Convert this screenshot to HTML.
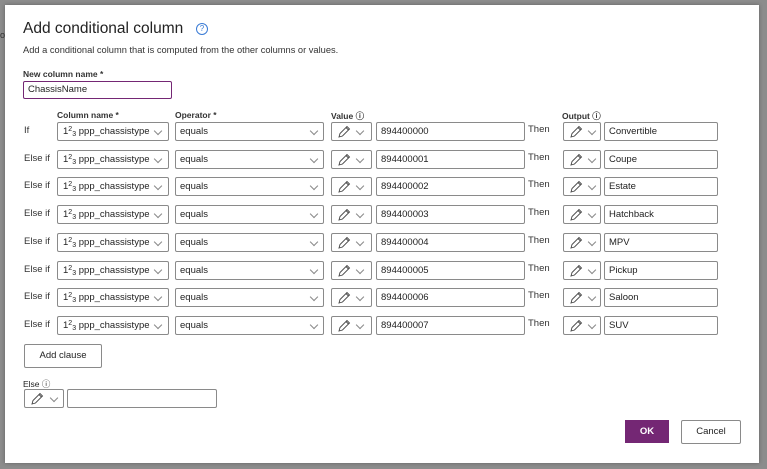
<!DOCTYPE html>
<html><head><style>
body{margin:0;width:767px;height:469px;background:#8c8c8c;font-family:"Liberation Sans",sans-serif;overflow:hidden;position:relative}
.dlg{position:absolute;left:5px;top:5px;width:754px;height:458px;background:#fff;box-shadow:0 0 4px rgba(0,0,0,.3)}
.a{position:absolute}
.box{position:absolute;height:17px;border:1px solid #8a8a8a;border-radius:2px;background:#fff;font-size:9.5px;line-height:17px;color:#222;box-sizing:content-box;white-space:nowrap;overflow:hidden}
.lbl{position:absolute;font-size:8.5px;font-weight:bold;color:#333}
.chev{position:absolute;width:5px;height:5px;border-right:1px solid #888;border-bottom:1px solid #888;transform:rotate(45deg)}
.side{position:absolute;font-size:9.5px;color:#333}
.sp{position:relative;font-size:7px}
</style></head><body>
<div class="a" style="left:0;top:30px;font-size:9px;color:#333">o</div>
<div class="dlg"></div>
<div class="a" style="left:23px;top:20px;font-size:15.5px;color:#222">Add conditional column</div>
<div class="a" style="left:196px;top:23px;width:10px;height:10px;border:1.2px solid #3a7bd5;border-radius:50%;font-size:8px;color:#3a7bd5;text-align:center;line-height:10px">?</div>
<div class="a" style="left:23px;top:45px;font-size:9.3px;color:#333">Add a conditional column that is computed from the other columns or values.</div>
<div class="lbl" style="left:23px;top:69px">New column name *</div>
<div class="box" style="left:23px;top:81px;width:143px;border:1.5px solid #742774;padding-left:4px;height:16px;line-height:16px">ChassisName</div>
<div class="lbl" style="left:57px;top:110px">Column name *</div>
<div class="lbl" style="left:175px;top:110px">Operator *</div>
<div class="lbl" style="left:331px;top:110px">Value ⓘ</div>
<div class="lbl" style="left:562px;top:110px">Output ⓘ</div>
<div id="rows"></div>
<div class="box" style="left:24px;top:344px;width:76px;height:22px;line-height:22px;text-align:center;font-size:9.5px">Add clause</div>
<div class="lbl" style="left:23px;top:378px;font-weight:normal;color:#222">Else ⓘ</div>
<div class="box" style="left:24px;top:389px;width:38px"><svg class="a" style="left:5px;top:2px" width="14" height="14" viewBox="0 0 14 14"><path d="M2 12l1-3.5 7-7 2.5 2.5-7 7z M9 2.5l2.5 2.5" fill="none" stroke="#444" stroke-width="0.9"/></svg><div class="chev" style="left:26px;top:5px"></div></div>
<div class="box" style="left:67px;top:389px;width:148px"></div>
<div class="a" style="left:625px;top:420px;width:44px;height:23px;background:#742774;color:#fff;font-size:9.5px;font-weight:bold;text-align:center;line-height:23px">OK</div>
<div class="box" style="left:681px;top:420px;width:58px;height:22px;line-height:22px;text-align:center">Cancel</div>
<script>
var vals=["Convertible","Coupe","Estate","Hatchback","MPV","Pickup","Saloon","SUV"];
var h="";
for(var i=0;i<8;i++){var y=Math.round(122+i*27.7);
var pen='<svg class="a" style="left:5px;top:2px" width="14" height="14" viewBox="0 0 14 14"><path d="M2 12l1-3.5 7-7 2.5 2.5-7 7z M9 2.5l2.5 2.5" fill="none" stroke="#444" stroke-width="0.9"/></svg><div class="chev" style="left:25px;top:5px"></div>';
h+='<div class="side" style="left:24px;top:'+(y+3)+'px">'+(i?'Else if':'If')+'</div>';
h+='<div class="box" style="left:57px;top:'+y+'px;width:110px"><span style="margin-left:5px">1<span class="sp" style="top:-3px">2</span><span class="sp" style="top:2px">3</span> ppp_chassistype</span><div class="chev" style="left:97px;top:5px"></div></div>';
h+='<div class="box" style="left:175px;top:'+y+'px;width:147px"><span style="margin-left:4px">equals</span><div class="chev" style="left:135px;top:5px"></div></div>';
h+='<div class="box" style="left:331px;top:'+y+'px;width:39px">'+pen+'</div>';
h+='<div class="box" style="left:376px;top:'+y+'px;width:147px"><span style="margin-left:4px">8944000'+('0'+i).slice(-2)+'</span></div>';
h+='<div class="side" style="left:528px;top:'+(y+2)+'px">Then</div>';
h+='<div class="box" style="left:563px;top:'+y+'px;width:36px">'+pen+'</div>';
h+='<div class="box" style="left:604px;top:'+y+'px;width:112px"><span style="margin-left:4px">'+vals[i]+'</span></div>';}
document.getElementById("rows").innerHTML=h;
</script>
</body></html>
